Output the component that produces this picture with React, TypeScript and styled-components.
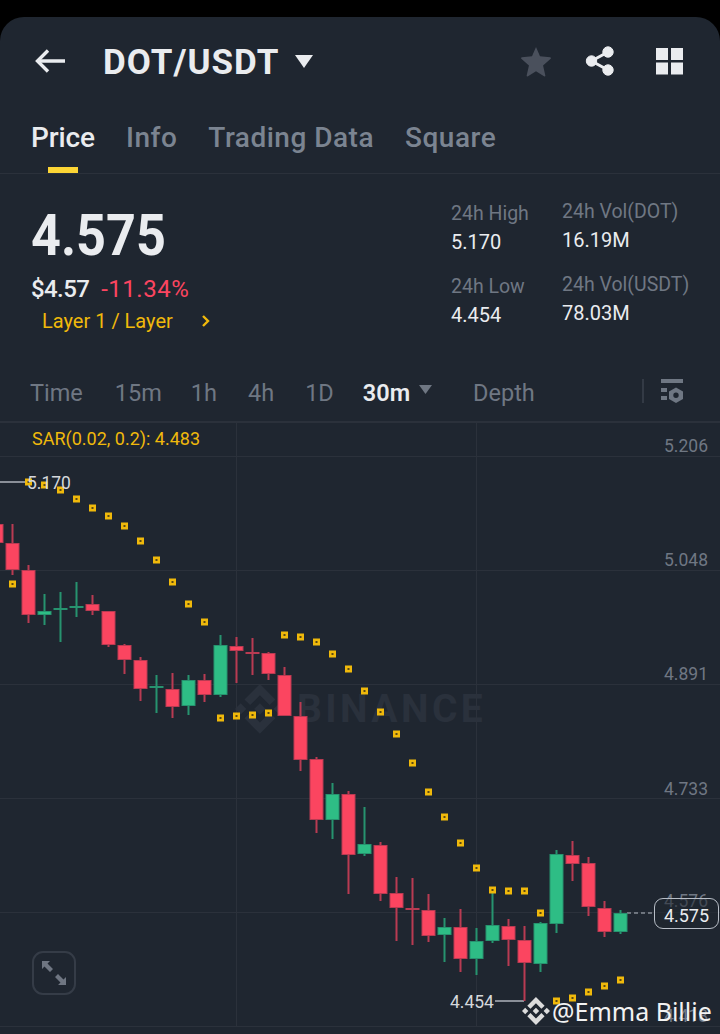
import styled, { createGlobalStyle } from "styled-components";

const GlobalStyle = createGlobalStyle`
  html, body {
    margin: 0;
    padding: 0;
    background: #000;
  }
  * {
    box-sizing: border-box;
  }
`;

const RED = "#fb4560";
const GREEN = "#2ebd85";
const YELLOW = "#f0b90b";
const GRID = "#2b313b";

const LOGO_PATHS = [
  "M38.171 53.203L62.759 28.616l24.6 24.6 14.306-14.306L62.759 0 23.865 38.895z",
  "M0 62.759l14.307-14.307 14.306 14.306-14.306 14.307z",
  "M38.171 72.316l24.588 24.588 24.6-24.6 14.313 14.299-38.913 38.894L23.865 86.623z",
  "M97.21 62.759l14.306-14.307 14.307 14.306-14.307 14.307z",
  "M77.27 62.752L62.759 48.241 52.03 58.97l-1.233 1.233-2.541 2.541 14.503 14.503 14.511-14.495z",
];

// x, wick top, wick bottom, body top, body bottom, up?
const CANDLES: [number, number, number, number, number, boolean][] = [
  [-3.5, 524, 545, 524, 543, false],
  [12.5, 524, 575, 543, 570, false],
  [28.5, 565, 623, 570, 615, false],
  [44.5, 594, 625, 611, 615, true],
  [60.5, 592, 642, 608, 610, true],
  [76.5, 582, 617, 606, 608, true],
  [92.5, 595, 615, 604, 611, false],
  [108.5, 611, 647, 611, 645, false],
  [124.5, 644, 674, 645, 660, false],
  [140.5, 657, 701, 660, 689, false],
  [156.5, 675, 713, 686, 688, true],
  [172.5, 673, 718, 689, 707, false],
  [188.5, 675, 715, 680, 706, true],
  [204.5, 674, 702, 680, 695, false],
  [220.5, 635, 697, 645, 695, true],
  [236.5, 637, 683, 646, 651, false],
  [252.5, 638, 675, 652, 654, false],
  [268.5, 652, 680, 653, 674, false],
  [284.5, 667, 716, 675, 716, false],
  [300.5, 702, 771, 716, 760, false],
  [316.5, 757, 833, 759, 820, false],
  [332.5, 783, 839, 794, 820, true],
  [348.5, 791, 894, 794, 855, false],
  [364.5, 807, 856, 844, 854, true],
  [380.5, 842, 901, 845, 894, false],
  [396.5, 877, 941, 893, 908, false],
  [412.5, 878, 945, 908, 910, false],
  [428.5, 894, 942, 910, 936, false],
  [444.5, 918, 962, 927, 935, true],
  [460.5, 909, 972, 927, 959, false],
  [476.5, 928, 975, 941, 959, true],
  [492.5, 890, 943, 925, 941, true],
  [508.5, 919, 966, 926, 940, false],
  [524.5, 926, 1001, 940, 963, false],
  [540.5, 922, 972, 923, 964, true],
  [556.5, 850, 933, 854, 924, true],
  [572.5, 841, 881, 855, 864, false],
  [588.5, 857, 916, 863, 907, false],
  [604.5, 901, 937, 908, 932, false],
  [620.5, 910, 934, 913, 932, true],
];

const SAR_DOTS: [number, number][] = [
  [12.5, 584], [28.5, 482], [44.5, 485], [60.5, 490], [76.5, 499], [92.5, 508],
  [108.5, 516], [124.5, 526], [140.5, 541], [156.5, 560], [172.5, 582], [188.5, 604],
  [204.5, 622], [220.5, 718], [236.5, 716], [252.5, 715], [268.5, 713], [284.5, 635],
  [300.5, 637], [316.5, 642], [332.5, 654], [348.5, 669], [364.5, 691], [380.5, 712],
  [396.5, 734], [412.5, 763], [428.5, 792], [444.5, 817], [460.5, 843], [476.5, 868],
  [492.5, 890], [508.5, 891], [524.5, 891], [540.5, 913], [556.5, 1001], [572.5, 998],
  [588.5, 992], [604.5, 986], [620.5, 980],
];

const GRID_ROWS = [456, 570, 684, 798, 912, 1026];
const GRID_COLS = [236, 476];

const AXIS_LABELS = [
  { value: "5.206", top: 446 },
  { value: "5.048", top: 560 },
  { value: "4.891", top: 674 },
  { value: "4.733", top: 789 },
  { value: "4.576", top: 901 },
  { value: "4.418", top: 1016 },
];

const Page = styled.div`
  width: 720px;
  height: 1034px;
  padding-top: 17px;
  overflow: hidden;
  background: #000;
`;

const Panel = styled.div`
  height: 1017px;
  display: flex;
  flex-direction: column;
  background: #1f2630;
  border-radius: 24px 24px 0 0;
  color: #eaecef;
  font-family: Roboto, "Liberation Sans", sans-serif;
  overflow: hidden;
`;

const Header = styled.header`
  height: 91px;
  flex: none;
  display: flex;
  align-items: center;
  padding: 0 36px 3px 35px;
`;

const Pair = styled.h1`
  margin: 3px 0 0 38px;
  font-size: 35px;
  font-weight: 700;
  line-height: 40px;
  letter-spacing: 1px;
`;

const PairCaret = styled.svg`
  margin: 0 0 0 16px;
`;

const HeaderActions = styled.div`
  margin-left: auto;
  display: flex;
  align-items: center;
`;

const HeaderIcon = styled.svg<{ $gap?: number }>`
  margin-left: ${(p) => p.$gap ?? 0}px;
`;

const TabBar = styled.nav`
  height: 66px;
  flex: none;
  display: flex;
  gap: 31px;
  padding: 12px 0 0 31px;
  border-bottom: 1px solid ${GRID};
`;

const Tab = styled.div<{ $active?: boolean }>`
  position: relative;
  height: 40px;
  font-size: 28px;
  font-weight: 500;
  line-height: 36px;
  letter-spacing: ${(p) => (p.$active ? "-0.1px" : "0.5px")};
  color: ${(p) => (p.$active ? "#eaecef" : "#7b8491")};

  &::after {
    content: "";
    display: ${(p) => (p.$active ? "block" : "none")};
    position: absolute;
    left: 17px;
    bottom: -13px;
    width: 30px;
    height: 6px;
    background: #fcd535;
  }
`;

const Stats = styled.section`
  height: 186px;
  flex: none;
  display: flex;
  padding: 28px 0 0 31px;
`;

const Summary = styled.div`
  width: 420px;
  flex: none;
  padding-top: 1px;
`;

const LastPrice = styled.div`
  font-size: 57px;
  font-weight: 700;
  line-height: 66px;
  transform: scaleX(0.915);
  transform-origin: left center;
`;

const ChangeRow = styled.div`
  display: flex;
  gap: 12px;
  margin-top: 4px;
  font-size: 24px;
  line-height: 32px;
`;

const Fiat = styled.span`
  font-weight: 500;
  letter-spacing: -0.6px;
`;

const Change = styled.span`
  color: ${RED};
  letter-spacing: 0.5px;
`;

const CategoryLink = styled.div`
  display: flex;
  align-items: center;
  gap: 28px;
  margin: 3px 0 0 11px;
  font-size: 20px;
  line-height: 26px;
  color: ${YELLOW};
`;

const StatColumns = styled.div`
  display: flex;
  gap: 32px;
`;

const StatColumn = styled.div<{ $offset: number }>`
  width: 79px;
  flex: none;
  margin-top: ${(p) => p.$offset}px;
  white-space: nowrap;
`;

const StatItem = styled.div`
  height: 73px;
`;

const StatLabel = styled.div`
  font-size: 19.5px;
  line-height: 24px;
  color: #6f7783;
`;

const StatValue = styled.div`
  margin-top: 3px;
  font-size: 20px;
  line-height: 26px;
  color: #eaecef;
`;

const Periods = styled.div`
  height: 63px;
  flex: none;
  display: flex;
  align-items: center;
  padding: 5px 0 0 30px;
  border-bottom: 2px solid ${GRID};
`;

const Period = styled.div<{ $active?: boolean; $gap: number }>`
  margin-right: ${(p) => p.$gap}px;
  font-size: 23.5px;
  line-height: 30px;
  font-weight: ${(p) => (p.$active ? 600 : 400)};
  color: ${(p) => (p.$active ? "#eaecef" : "#6f7783")};
`;

const PeriodCaret = styled.svg`
  margin: 0 41px 8px 0;
`;

const PeriodTools = styled.div`
  margin-left: auto;
  display: flex;
  align-items: center;
  gap: 16px;
  padding: 0 36px 4px 0;
`;

const ToolDivider = styled.div`
  width: 2px;
  height: 24px;
  background: #333a45;
`;

const Chart = styled.div`
  position: relative;
  flex: 1;
  margin-top: -1px;
`;

const ChartCanvas = styled.svg`
  display: block;
  position: relative;
  z-index: 1;
`;

const WatermarkLogo = styled.div`
  position: absolute;
  z-index: 0;
  left: 235px;
  top: 262px;
  display: flex;
  align-items: center;
  gap: 12px;
  font-size: 39px;
  font-weight: 700;
  letter-spacing: 3.4px;
  color: #2a313c;
`;

const SarLegend = styled.div`
  position: absolute;
  z-index: 2;
  left: 32px;
  top: 6px;
  font-size: 18px;
  line-height: 22px;
  color: ${YELLOW};
`;

const AxisLabel = styled.div<{ $top: number }>`
  position: absolute;
  z-index: 2;
  right: 12px;
  top: ${(p) => p.$top - 422 - 10}px;
  font-size: 17.5px;
  line-height: 20px;
  color: #6f7783;
`;

const PriceMark = styled.div<{ $left: number; $top: number }>`
  position: absolute;
  z-index: 2;
  left: ${(p) => p.$left}px;
  top: ${(p) => p.$top - 422 - 10}px;
  font-size: 17.5px;
  line-height: 20px;
  color: #d5d8dc;
`;

const LastTag = styled.div`
  position: absolute;
  z-index: 3;
  left: 654px;
  top: 476px;
  width: 65px;
  height: 31px;
  padding-top: 3px;
  display: flex;
  align-items: center;
  justify-content: center;
  font-size: 18px;
  color: #eaecef;
  background: rgba(31, 38, 48, 0.55);
  border: 1px solid #b7bdc6;
  border-radius: 9px;
`;

const ExpandButton = styled.div`
  position: absolute;
  z-index: 3;
  left: 32px;
  top: 529px;
  width: 44px;
  height: 44px;
  display: flex;
  align-items: center;
  justify-content: center;
  border: 2px solid #353c47;
  border-radius: 11px;
`;

const Credit = styled.div`
  position: absolute;
  z-index: 4;
  left: 522px;
  top: 574px;
  display: flex;
  align-items: center;
  gap: 2px;
  font-family: "Noto Sans", Roboto, sans-serif;
  font-size: 25px;
  line-height: 30px;
  white-space: nowrap;
  color: #f2f2f2;
`;

function Logo({ size, color }: { size: number; color: string }) {
  return (
    <svg width={size} height={size} viewBox="0 0 126 126" fill={color}>
      {LOGO_PATHS.map((d) => (
        <path key={d} d={d} />
      ))}
    </svg>
  );
}

function Candle({ c }: { c: (typeof CANDLES)[number] }) {
  const [x, wickTop, wickBottom, bodyTop, bodyBottom, up] = c;
  const fill = up ? GREEN : RED;
  const edge = up ? "#27936f" : "#b93b52";
  return (
    <g>
      <rect x={x - 1} y={wickTop} width={2} height={wickBottom - wickTop} fill={edge} />
      <rect x={x - 6.5} y={bodyTop + 0.5} width={14 - 1} height={Math.max(bodyBottom - bodyTop - 1, 1)} fill={fill} stroke={edge} strokeWidth={1} />
    </g>
  );
}

export default function App() {
  return (
    <>
      <GlobalStyle />
      <Page>
        <Panel>
          <Header>
            <svg width="30" height="24" viewBox="0 0 30 24" fill="none" stroke="#eaecef" strokeWidth="3.4">
              <path d="M30 12H3" />
              <path d="M13 1.5L2.5 12 13 22.5" />
            </svg>
            <Pair>DOT/USDT</Pair>
            <PairCaret width="18" height="13" viewBox="0 0 18 13" fill="#eaecef">
              <path d="M0 0h18l-9 13z" />
            </PairCaret>
            <HeaderActions>
              <HeaderIcon width="32" height="32" viewBox="0 0 24 24" fill="#4a505c">
                <path d="M12 1.5l3 7 7.6.7c.6.1.8.8.4 1.2l-5.700 5 1.700 7.400c.1.6-.5 1-1 .7L12 19.600l-6 3.900c-.5.3-1.100-.1-1-.7l1.700-7.400-5.700-5c-.4-.4-.2-1.100.4-1.200L9 8.500z" />
              </HeaderIcon>
              <HeaderIcon $gap={33} width="30" height="30" viewBox="0 0 30 30" fill="#eaecef" stroke="#eaecef">
                <circle cx="23" cy="6" r="5.2" />
                <circle cx="6.500" cy="15" r="5.2" />
                <circle cx="23" cy="24" r="5.2" />
                <path d="M23 6L6.500 15 23 24" fill="none" strokeWidth="3" />
              </HeaderIcon>
              <HeaderIcon $gap={41} width="28" height="27" viewBox="0 0 28 27" fill="#eaecef">
                <rect x="0" y="0" width="12" height="12" />
                <rect x="15" y="0" width="12" height="12" />
                <rect x="0" y="14.500" width="12" height="12" />
                <rect x="15" y="14.500" width="12" height="12" />
              </HeaderIcon>
            </HeaderActions>
          </Header>

          <TabBar>
            <Tab $active>Price</Tab>
            <Tab>Info</Tab>
            <Tab>Trading Data</Tab>
            <Tab>Square</Tab>
          </TabBar>

          <Stats>
            <Summary>
              <LastPrice>4.575</LastPrice>
              <ChangeRow>
                <Fiat>$4.57</Fiat>
                <Change>-11.34%</Change>
              </ChangeRow>
              <CategoryLink>
                Layer 1 / Layer
                <svg width="10" height="14" viewBox="0 0 10 14" fill="none" stroke={YELLOW} strokeWidth="2.4">
                  <path d="M2 2l5 5-5 5" />
                </svg>
              </CategoryLink>
            </Summary>
            <StatColumns>
              <StatColumn $offset={0}>
                <StatItem>
                  <StatLabel>24h High</StatLabel>
                  <StatValue>5.170</StatValue>
                </StatItem>
                <StatItem>
                  <StatLabel>24h Low</StatLabel>
                  <StatValue>4.454</StatValue>
                </StatItem>
              </StatColumn>
              <StatColumn $offset={-2}>
                <StatItem>
                  <StatLabel>24h Vol(DOT)</StatLabel>
                  <StatValue>16.19M</StatValue>
                </StatItem>
                <StatItem>
                  <StatLabel>24h Vol(USDT)</StatLabel>
                  <StatValue>78.03M</StatValue>
                </StatItem>
              </StatColumn>
            </StatColumns>
          </Stats>

          <Periods>
            <Period $gap={32}>Time</Period>
            <Period $gap={29}>15m</Period>
            <Period $gap={31}>1h</Period>
            <Period $gap={31}>4h</Period>
            <Period $gap={29}>1D</Period>
            <Period $active $gap={9}>30m</Period>
            <PeriodCaret width="13" height="9" viewBox="0 0 13 9" fill="#6f7783">
              <path d="M0 0h13L6.500 9z" />
            </PeriodCaret>
            <Period $gap={0}>Depth</Period>
            <PeriodTools>
              <ToolDivider />
              <svg width="24" height="24" viewBox="0 0 24 24" fill="#6f7783">
                <rect x="1" y="0" width="22" height="4" />
                <rect x="1" y="9" width="6" height="4" />
                <rect x="1" y="17" width="6" height="4" />
                <path fillRule="evenodd" d="M16 8.500l7 4v7.500l-7 4-7-4v-7.500zM16 13.500a2.700 2.700 0 100 5.400 2.700 2.700 0 000-5.400z" />
              </svg>
            </PeriodTools>
          </Periods>

          <Chart>
            <WatermarkLogo>
              <Logo size={50} color="#2a313c" />
              BINANCE
            </WatermarkLogo>
            <ChartCanvas width="720" height="612" viewBox="0 422 720 612">
              {GRID_ROWS.map((y) => (
                <rect key={y} x="0" y={y} width="720" height="1" fill={GRID} />
              ))}
              {GRID_COLS.map((x) => (
                <rect key={x} x={x} y="422" width="1" height="604" fill={GRID} />
              ))}
              <rect x="0" y="481" width="27" height="2" fill="#8a8f98" />
              <rect x="495" y="1000" width="29" height="2" fill="#8a8f98" />
              <path d="M627 913h27" stroke="#b7bdc6" strokeWidth="1" strokeDasharray="4 3" />
              {CANDLES.map((c) => (
                <Candle key={c[0]} c={c} />
              ))}
              {SAR_DOTS.map(([x, y]) => (
                <g key={x}>
                  <rect x={x - 3.5} y={y - 3.5} width="7" height="7" fill={YELLOW} />
                  <rect x={x - 1} y={y - 1} width="2" height="2" fill="#5c4a12" />
                </g>
              ))}
            </ChartCanvas>
            <SarLegend>SAR(0.02, 0.2): 4.483</SarLegend>
            {AXIS_LABELS.map((l) => (
              <AxisLabel key={l.value} $top={l.top}>
                {l.value}
              </AxisLabel>
            ))}
            <PriceMark $left={27} $top={483}>5.170</PriceMark>
            <PriceMark $left={450} $top={1002}>4.454</PriceMark>
            <LastTag>4.575</LastTag>
            <ExpandButton>
              <svg width="26" height="26" viewBox="0 0 26 26" fill="#6f7682">
                <path d="M1 1h8L6.500 3.500l5.500 5.500-3 3-5.500-5.500L1 9z" />
                <path d="M25 25h-8l2.500-2.500-5.500-5.500 3-3 5.500 5.500L25 17z" />
              </svg>
            </ExpandButton>
            <Credit>
              <Logo size={28} color="#dcdcdc" />
              @Emma Billie
            </Credit>
          </Chart>
        </Panel>
      </Page>
    </>
  );
}
